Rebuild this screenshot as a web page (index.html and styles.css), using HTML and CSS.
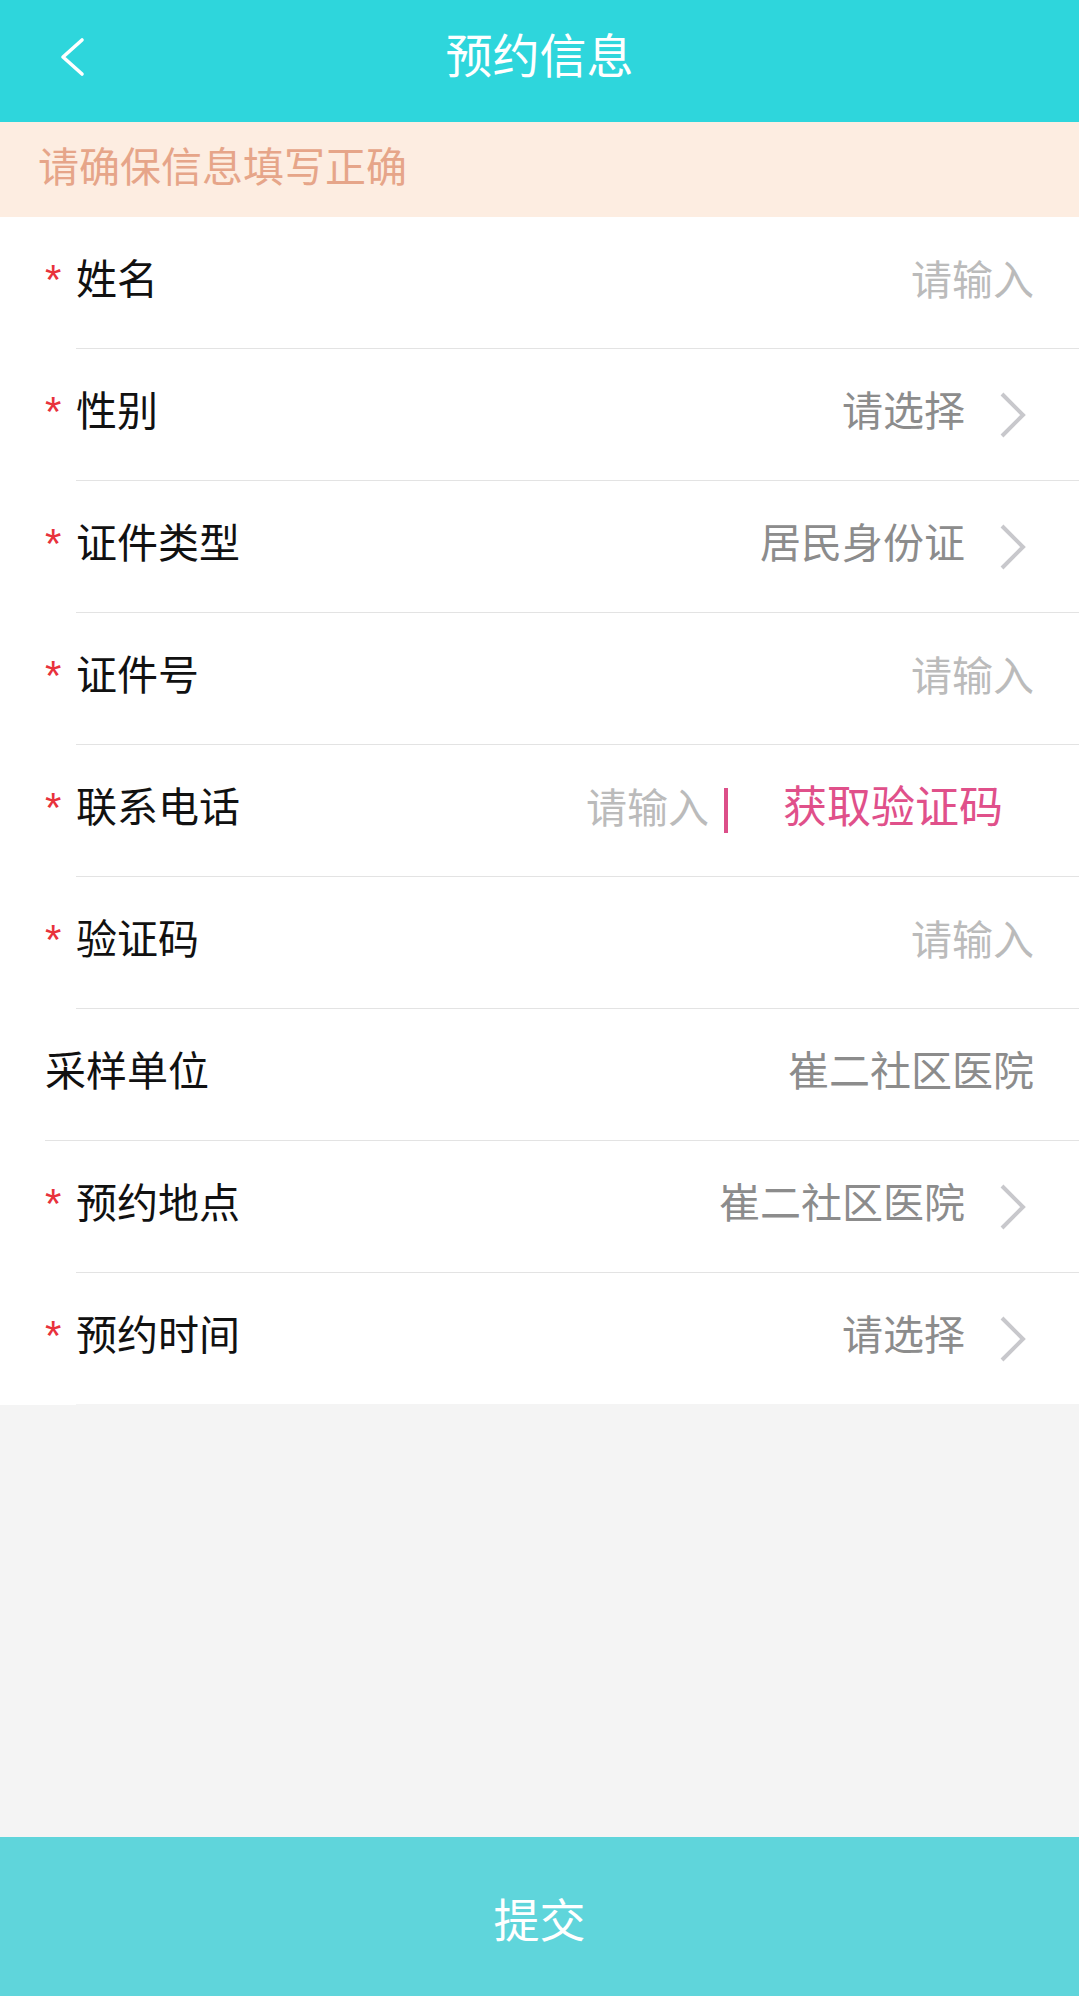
FILE: index.html
```html
<!DOCTYPE html>
<html lang="zh-CN">
<head>
    <meta charset="UTF-8">
    <meta name="viewport" content="width=device-width, initial-scale=1.0">
    <title>预约信息</title>
    <link rel="stylesheet" href="styles.css">
</head>
<body>
    <div class="page">
        <header class="top-bar">
            <a class="back-btn" href="#">
                <svg width="30" height="42" viewBox="0 0 30 42">
                    <polyline points="26,4 7,21 26,38" fill="none" stroke="#fff" stroke-width="3.6" stroke-linecap="round" stroke-linejoin="round"/>
                </svg>
            </a>
            <h1 class="title">预约信息</h1>
            <span></span>
        </header>

        <div class="notice">请确保信息填写正确</div>

        <form class="form-list" id="booking-form">
            <div class="row">
                <span class="star">*</span>
                <div class="row-main">
                    <span class="label">姓名</span>
                    <input class="field" type="text" placeholder="请输入">
                </div>
            </div>
            <div class="row">
                <span class="star">*</span>
                <div class="row-main">
                    <span class="label">性别</span>
                    <span class="value">请选择</span>
                    <svg class="arrow" width="27" height="46" viewBox="0 0 27 46">
                        <polyline points="3,2 24,23 3,44" fill="none" stroke="#c8c8cc" stroke-width="4"/>
                    </svg>
                </div>
            </div>
            <div class="row">
                <span class="star">*</span>
                <div class="row-main">
                    <span class="label">证件类型</span>
                    <span class="value">居民身份证</span>
                    <svg class="arrow" width="27" height="46" viewBox="0 0 27 46">
                        <polyline points="3,2 24,23 3,44" fill="none" stroke="#c8c8cc" stroke-width="4"/>
                    </svg>
                </div>
            </div>
            <div class="row">
                <span class="star">*</span>
                <div class="row-main">
                    <span class="label">证件号</span>
                    <input class="field" type="text" placeholder="请输入">
                </div>
            </div>
            <div class="row">
                <span class="star">*</span>
                <div class="row-main">
                    <span class="label">联系电话</span>
                    <input class="field" type="tel" placeholder="请输入">
                    <span class="divider"></span>
                    <a class="code-btn" href="#">获取验证码</a>
                </div>
            </div>
            <div class="row">
                <span class="star">*</span>
                <div class="row-main">
                    <span class="label">验证码</span>
                    <input class="field" type="text" placeholder="请输入">
                </div>
            </div>
            <div class="row">
                <div class="row-main">
                    <span class="label">采样单位</span>
                    <span class="value">崔二社区医院</span>
                </div>
            </div>
            <div class="row">
                <span class="star">*</span>
                <div class="row-main">
                    <span class="label">预约地点</span>
                    <span class="value">崔二社区医院</span>
                    <svg class="arrow" width="27" height="46" viewBox="0 0 27 46">
                        <polyline points="3,2 24,23 3,44" fill="none" stroke="#c8c8cc" stroke-width="4"/>
                    </svg>
                </div>
            </div>
            <div class="row">
                <span class="star">*</span>
                <div class="row-main last">
                    <span class="label">预约时间</span>
                    <span class="value">请选择</span>
                    <svg class="arrow" width="27" height="46" viewBox="0 0 27 46">
                        <polyline points="3,2 24,23 3,44" fill="none" stroke="#c8c8cc" stroke-width="4"/>
                    </svg>
                </div>
            </div>
        </form>

        <div class="spacer"></div>

        <button class="submit-btn" type="submit" form="booking-form">提交</button>
    </div>
</body>
</html>
```

FILE: styles.css
```css
body, html {
    margin: 0;
    padding: 0;
    height: 100%;
    font-family: "Noto Sans CJK SC", "Noto Sans", sans-serif;
    background-color: #f4f4f4;
}

.page {
    display: flex;
    flex-direction: column;
    min-height: 100%;
}

.top-bar {
    height: 122px;
    background-color: #2ed6dc;
    display: grid;
    grid-template-columns: 1fr auto 1fr;
    align-items: center;
    box-sizing: border-box;
    padding-bottom: 8px;
}

.back-btn {
    justify-self: start;
    margin-left: 56px;
    display: flex;
}

.title {
    margin: 0 0 10px;
    font-size: 47px;
    font-weight: normal;
    color: #fff;
    line-height: 1;
}

.notice {
    height: 95px;
    box-sizing: border-box;
    background-color: #fdede1;
    color: #e6a589;
    font-size: 41px;
    line-height: 85px;
    padding-left: 38px;
}

.form-list {
    margin: 0;
    background-color: #fff;
}

.row {
    display: flex;
    padding-left: 45px;
}

.star {
    width: 31px;
    color: #e8323c;
    font-family: "Liberation Sans", sans-serif;
    font-size: 42px;
    line-height: 126px;
    height: 132px;
}

.row-main {
    flex: 1;
    height: 132px;
    box-sizing: border-box;
    display: flex;
    align-items: center;
    padding-right: 45px;
    border-bottom: 1px solid #e3e3e3;
    font-size: 41px;
}

.row-main.last {
    border-bottom-color: #f4f4f4;
}

.label {
    color: #111;
    margin-right: auto;
    white-space: nowrap;
    padding-bottom: 14px;
}

.field {
    flex: 1;
    min-width: 0;
    border: none;
    outline: none;
    background: transparent;
    text-align: right;
    font-family: inherit;
    font-size: 41px;
    color: #333;
    padding: 0 0 12px;
}

.field::placeholder {
    color: #bbbbbb;
}

.value {
    color: #8c8c8c;
    white-space: nowrap;
    padding-bottom: 14px;
}

.arrow {
    margin-left: 34px;
    margin-right: 8px;
}

.divider {
    width: 4px;
    height: 45px;
    background-color: #dc4f89;
    margin-left: 15px;
}

.code-btn {
    color: #e0508a;
    font-size: 44px;
    text-decoration: none;
    margin-left: 55px;
    margin-right: 31px;
    white-space: nowrap;
    padding-bottom: 14px;
}

.spacer {
    flex: 1;
}

.submit-btn {
    height: 159px;
    width: 100%;
    border: none;
    background-color: #5fd5db;
    color: #fff;
    font-family: inherit;
    font-size: 46px;
    cursor: pointer;
}
```
